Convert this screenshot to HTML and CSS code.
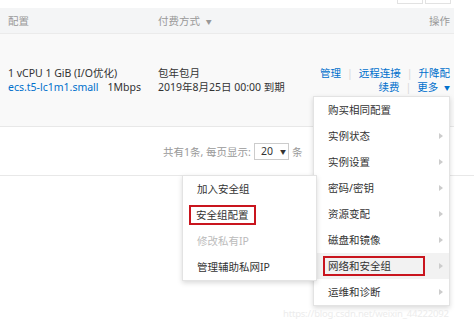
FILE: index.html
```html
<!DOCTYPE html>
<html lang="zh-CN">
<head>
  <meta charset="UTF-8">
  <title>实例列表</title>
  <link rel="stylesheet" href="styles.css">
</head>
<body>
  <div class="page">
    <div class="toolbar">
      <span class="tool-btn"></span>
      <span class="tool-btn"></span>
    </div>

    <div class="table">
      <div class="thead">
        <div class="cell">配置</div>
        <div class="cell">付费方式 <span class="caret">▼</span></div>
        <div class="cell right">操作</div>
      </div>
      <div class="trow">
        <div class="cell">
          <div>1 vCPU 1 GiB (I/O优化)</div>
          <div><a class="link">ecs.t5-lc1m1.small</a><span class="bw">1Mbps</span></div>
        </div>
        <div class="cell">
          <div>包年包月</div>
          <div>2019年8月25日 00:00 到期</div>
        </div>
        <div class="cell right">
          <div><a class="link">管理</a><span class="sep">|</span><a class="link">远程连接</a><span class="sep">|</span><a class="link">升降配</a></div>
          <div><a class="link">续费</a><span class="sep">|</span><a class="link">更多 <span class="caret">▼</span></a></div>
        </div>
      </div>
    </div>

    <div class="pager">
      共有1条, 每页显示:
      <span class="page-size">20<span class="caret dark">▼</span></span>
      条
    </div>
    <div class="footer"></div>
  </div>

  <ul class="menu main-menu">
    <li>购买相同配置</li>
    <li class="has-sub">实例状态</li>
    <li class="has-sub">实例设置</li>
    <li class="has-sub">密码/密钥</li>
    <li class="has-sub">资源变配</li>
    <li class="has-sub">磁盘和镜像</li>
    <li class="has-sub hover"><span class="mark wide">网络和安全组</span></li>
    <li class="has-sub">运维和诊断</li>
  </ul>

  <ul class="menu sub-menu">
    <li>加入安全组</li>
    <li><span class="mark">安全组配置</span></li>
    <li class="disabled">修改私有IP</li>
    <li>管理辅助私网IP</li>
  </ul>

  <div class="watermark">https://blog.csdn.net/weixin_44222092</div>
</body>
</html>
```

FILE: styles.css
```css
body {
  margin: 0;
  font-family: "Noto Sans", "Noto Sans CJK SC", sans-serif;
  font-size: 10.5px;
  color: #333;
  background: #fff;
  position: relative;
  width: 474px;
  height: 325px;
  overflow: hidden;
}
.page {
  width: 454px;
}
.toolbar {
  height: 8px;
  display: flex;
  justify-content: flex-end;
  gap: 2px;
  padding-right: 3px;
}
.tool-btn {
  width: 26px;
  height: 4px;
  border: 1px solid #e2e2e2;
  border-top: none;
  box-sizing: border-box;
}
.thead, .trow {
  display: grid;
  grid-template-columns: 150px 1fr auto;
  padding: 0 4px 0 8px;
}
.thead {
  height: 25px;
  align-items: center;
  background: #f4f5f6;
  color: #999;
  border-bottom: 1px solid #ebebeb;
}
.trow {
  height: 92px;
  align-content: center;
  background: #f9f9f9;
  border-bottom: 1px solid #e8e8e8;
  line-height: 14px;
}
.trow .cell {
  align-self: center;
}
.right {
  text-align: right;
}
.caret {
  font-size: 6px;
  color: #999;
  vertical-align: 1px;
  margin-left: 3px;
}
.caret.dark {
  color: #333;
  margin-left: 7px;
}
.link {
  color: #0070cc;
  text-decoration: none;
}
.link .caret {
  color: #0070cc;
}
.bw {
  margin-left: 9px;
}
.sep {
  color: #d8d8d8;
  margin: 0 6px;
}
.pager {
  height: 48px;
  display: flex;
  align-items: center;
  padding-left: 163px;
  color: #999;
  gap: 3px;
  white-space: nowrap;
}
.page-size {
  display: inline-block;
  width: 35px;
  height: 17px;
  line-height: 15px;
  box-sizing: border-box;
  border: 1px solid #ccc;
  color: #333;
  padding-left: 6px;
  white-space: nowrap;
}
.footer {
  width: 474px;
  border-top: 1px solid #e8e8e8;
}
.menu {
  list-style: none;
  margin: 0;
  padding: 0;
  position: absolute;
  background: #fff;
  border: 1px solid #e3e3e3;
  box-shadow: 0 2px 5px rgba(0, 0, 0, 0.15);
}
.menu li {
  height: 26px;
  line-height: 26px;
  padding-left: 14px;
  position: relative;
}
.main-menu {
  left: 313px;
  top: 96px;
  width: 135px;
}
.sub-menu {
  left: 182px;
  top: 175px;
  width: 133px;
  z-index: 2;
}
.has-sub::after {
  content: "";
  position: absolute;
  right: 6px;
  top: 10px;
  border-left: 4px solid #ccc;
  border-top: 3.5px solid transparent;
  border-bottom: 3.5px solid transparent;
}
.hover {
  background: #f2f2f2;
}
.mark {
  display: inline-block;
  line-height: 16px;
  border: 2px solid #c9151e;
  padding: 0 5px;
  margin-left: -8px;
}
.mark.wide {
  width: 90px;
  padding-left: 3px;
  margin-left: -5px;
}
.disabled {
  color: #bbb;
}
.watermark {
  position: absolute;
  left: 283px;
  top: 307px;
  color: #ececec;
  font-size: 9.5px;
  letter-spacing: -0.2px;
  white-space: nowrap;
}
```
